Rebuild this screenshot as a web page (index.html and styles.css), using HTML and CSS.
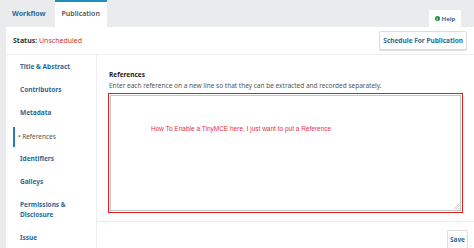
FILE: index.html
```html
<!DOCTYPE html>
<html lang="en">
<head>
  <meta charset="UTF-8">
  <title>Publication</title>
  <link rel="stylesheet" href="styles.css">
</head>
<body>
  <div class="tabs">
    <a class="tab">Workflow</a>
    <a class="tab tab-active">Publication</a>
    <a class="help"><span class="help-icon">i</span>Help</a>
  </div>

  <div class="panel">
    <div class="status-row">
      <div class="status"><b>Status:</b> <span class="unscheduled">Unscheduled</span></div>
      <button class="btn">Schedule For Publication</button>
    </div>

    <div class="main">
      <!-- side menu -->
      <ul class="side-nav">
        <li>Title &amp; Abstract</li>
        <li>Contributors</li>
        <li>Metadata</li>
        <li class="current">• References</li>
        <li>Identifiers</li>
        <li>Galleys</li>
        <li>Permissions &amp;<br>Disclosure</li>
        <li>Issue</li>
      </ul>

      <div class="content">
        <div class="form">
          <div class="label">References</div>
          <div class="desc">Enter each reference on a new line so that they can be extracted and recorded separately.</div>
          <div class="highlight">
            <div class="textarea">
              <p class="note">How To Enable a TinyMCE here, I just want to put a Reference</p>
              <svg class="grip" width="5" height="5" viewBox="0 0 5 5"><path d="M5 0L0 5M5 2L2 5M5 4L4 5" stroke="#aaa" stroke-width="0.6"/></svg>
            </div>
          </div>
        </div>
        <div class="footer">
          <button class="btn btn-small">Save</button>
        </div>
      </div>
    </div>
  </div>
</body>
</html>
```

FILE: styles.css
```css
/* base */
body {
  margin: 0;
  font-family: "Noto Sans", "Open Sans", sans-serif;
  background: #e9ebec;
  color: #222;
  height: 248px;
  overflow: hidden;
}

/* top tabs */
.tabs {
  display: flex;
  align-items: flex-end;
  height: 27px;
  padding-left: 6px;
  padding-right: 13px;
}

.tab {
  font-size: 7px;
  font-weight: bold;
  color: #2d6996;
  padding: 0 6px;
  height: 25px;
  line-height: 23px;
  border-top: 2px solid transparent;
}

.tab-active {
  background: #fff;
  color: #555;
  font-weight: 600;
  border-top-color: #1f8fbf;
  margin-left: 3px;
  padding: 0 7px;
}

.help {
  margin-left: auto;
  background: #fff;
  height: 17px;
  width: 32px;
  font-size: 6px;
  font-weight: bold;
  color: #2d6996;
  display: flex;
  align-items: center;
  justify-content: center;
  gap: 2px;
}

.help-icon {
  width: 5px;
  height: 5px;
  border-radius: 50%;
  background: #1e8d3a;
  color: #fff;
  font-size: 4px;
  line-height: 5px;
  text-align: center;
}

/* white panel */
.panel {
  background: #fff;
  margin-left: 6px;
  height: 221px;
}

.status-row {
  display: flex;
  align-items: center;
  justify-content: space-between;
  height: 28px;
  padding: 0 7px 0 7px;
  border-bottom: 1px solid #eee;
  box-sizing: border-box;
}

.status {
  font-size: 7px;
  color: #333;
}

.unscheduled {
  color: #d0323c;
}

.btn {
  font-family: "Noto Sans", "Open Sans", sans-serif;
  font-size: 6.5px;
  font-weight: bold;
  color: #2d6996;
  background: #fff;
  border: 1px solid #ddd;
  border-radius: 2px;
  box-shadow: 0 1px 0 #ddd;
  padding: 4px 3px;
}

.btn-small {
  padding: 4px 2px;
}

.main {
  display: flex;
}

/* side menu */
.side-nav {
  list-style: none;
  margin: 0;
  padding: 0;
  width: 90px;
  border-right: 1px solid #eee;
  height: 200px;
}

.side-nav li {
  font-size: 6.5px;
  font-weight: bold;
  color: #2d6996;
  padding: 6.5px 6px 6.5px 14px;
  line-height: 10px;
}

.side-nav li.current {
  color: #555;
  font-weight: normal;
  border-left: 2px solid #2a7bb3;
  margin: 2.5px 0 0.5px 7px;
  padding: 5px 6px 5px 3px;
}

/* content */
.content {
  flex: 1;
}

.form {
  padding: 14px 11px 0 12px;
  border-bottom: 1px solid #eee;
  height: 167px;
  box-sizing: border-box;
}

.label {
  font-size: 6.5px;
  font-weight: bold;
  color: #222;
  line-height: 11px;
}

.desc {
  font-size: 6.5px;
  color: #555;
  line-height: 11px;
}

.highlight {
  border: 1.5px solid #e01e1e;
  padding: 1px;
  margin-top: 2px;
  margin-left: -1px;
}

.textarea {
  border: 1px solid #c3c7cb;
  height: 114px;
  position: relative;
}

.note {
  margin: 29px 0 0 40px;
  font-family: "Liberation Sans", Arial, sans-serif;
  font-size: 6.5px;
  color: #e0324a;
}

.grip {
  position: absolute;
  right: 1px;
  bottom: 1px;
}

.footer {
  display: flex;
  justify-content: flex-end;
  padding: 8px 6px 0 0;
}
```
